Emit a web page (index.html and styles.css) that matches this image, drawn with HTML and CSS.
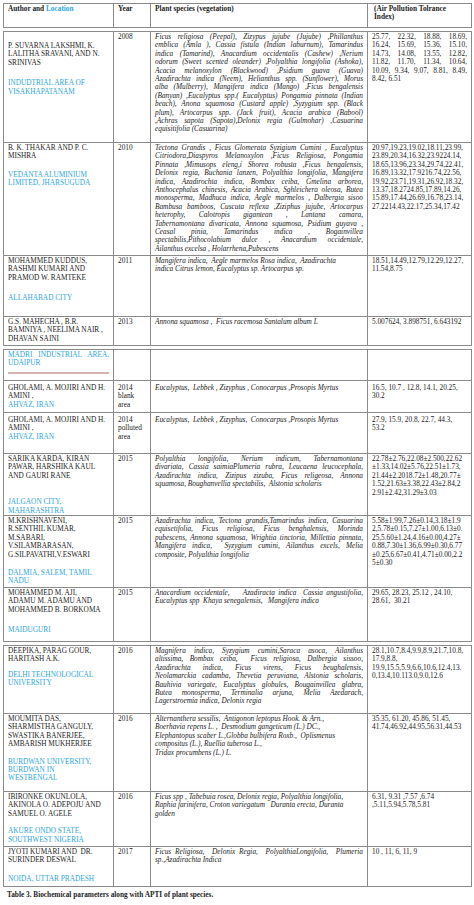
FILE: index.html
```html
<!DOCTYPE html>
<html>
<head>
<meta charset="utf-8">
<link rel="stylesheet" href="styles.css">
</head>
<body>
<div class="page">
<table class="t">
  <colgroup><col class="c1"><col class="c2"><col class="c3"><col class="c4"></colgroup>
  <tr class="hd">
    <td><b>Author and <span class="loc">Location</span></b></td>
    <td><b>Year</b></td>
    <td><b>Plant species (vegetation)</b></td>
    <td><b class="apti">(Air Pollution Tolrance<br>Index)</b></td>
  </tr>
</table>

<table class="t">
  <colgroup><col class="c1"><col class="c2"><col class="c3"><col class="c4"></colgroup>
  <tr class="r1">
    <td>
      <div class="sp9"></div>
      <div>P. SUVARNA LAKSHMI, K.<br>LALITHA SRAVANI, AND N.<br>SRINIVAS</div>
      <div class="sp12"></div>
      <div class="loc">INDUDTRIAL AREA OF<br>VISAKHAPATANAM</div>
    </td>
    <td>2008</td>
    <td class="it">
      <span class="jl">Ficus religiosa (Peepal), Zizypus jujube (Jujube) ,Phillanthus</span>
      <span class="jl">emblica (Amla ), Cassia fistula (Indian laburnum), Tamarindus</span>
      <span class="jl">indica (Tamarind), Anacardium occidentalis (Cashew) ,Nerium</span>
      <span class="jl">odorum (Sweet scented oleander) ,Polyalthia longifolia (Ashoka),</span>
      <span class="jl">Acacia melanoxylon (Blackwood) ,Psidium guava (Guava)</span>
      <span class="jl">Azadirachta indica (Neem), Helianthus spp. (Sunflower), Morus</span>
      <span class="jl">alba (Mulberry), Mangifera indica (Mango) ,Ficus bengalensis</span>
      <span class="jl">(Banyan) ,Eucalyptus spp.( Eucalyptus) Pongamia pinnata (Indian</span>
      <span class="jl">beach), Anona squamosa (Custard apple) ,Syzygium spp. (Black</span>
      <span class="jl">plum), Artocarpus spp. (Jack fruit), Acacia arabica (Babool)</span>
      <span class="jl">,Achras sapota (Sapota),Delonix regia (Gulmohar) ,Casuarina</span>
      <span class="ll">equisitifolia (Casuarina)</span>
    </td>
    <td>
      <span class="jl">25.77, 22.32, 18.88, 18.69,</span>
      <span class="jl">16.24, 15.69, 15.36, 15.10,</span>
      <span class="jl">14.73, 14.08, 13.55, 12.82,</span>
      <span class="jl">11.82, 11.70, 11.34, 10.64,</span>
      <span class="jl">10.09, 9.34, 9.07, 8.81, 8.49,</span>
      <span class="ll">8.42, 6.51</span>
    </td>
  </tr>
  <tr class="r2">
    <td>
      <div>B. K. THAKAR AND P. C.<br>MISHRA</div>
      <div class="sp10"></div>
      <div class="loc">VEDANTA ALUMINIUM<br>LIMITED, JHARSUGUDA</div>
    </td>
    <td>2010</td>
    <td class="it">
      <span class="jl">Tectona Grandis , Ficus Glomerata Syzigium Cumini , Eucalyptus</span>
      <span class="jl">Citriodora,Diaspyros Melanoxylon ,Ficus Religiosa, Pongamia</span>
      <span class="jl">Pinnata ,Mimusops eleng,i Shorea robusta ,Ficus bengalensis,</span>
      <span class="jl">Delonix regia, Buchania lanzen, Polyalthia longifolia, Mangifera</span>
      <span class="jl">indica, Azadirochta indica, Bombax ceiba, Gmelina arborea,</span>
      <span class="jl">Anthocephalus chinesis, Acacia Arabica, Sghleichera oleosa, Butea</span>
      <span class="jl">monosperma, Madhuca indica, Aegle marmelos , Dalbergia sisoo</span>
      <span class="jl">Bambusa bamboos, Cuscuta reflexa ,Ziziphus jujube, Artocarpus</span>
      <span class="jl">heterophy, Calotropis gigantean , Lantana camara,</span>
      <span class="jl">Tabernamontana divaricata, Annona squamosa, Psidium guyava ,</span>
      <span class="jl">Ceasal pinia, Tamarindus indica , Bogainvillea</span>
      <span class="jl">spectabilis,Pithocolabium dulce , Anacardium occidentale,</span>
      <span class="ll">Ailanthus excelsa , Holarrhena,Pubescens</span>
    </td>
    <td>
      <span class="jl">20.97,19.23,19.02,18.11,23.99,</span>
      <span class="jl">23.89,20.34,16.32,23.9224.14,</span>
      <span class="jl">18.65,13.96,23.34,29.74,22.41,</span>
      <span class="jl">16.89,13.32,17.9216.74,22.56,</span>
      <span class="jl">19.92,23.71,19.31,26.92,18.32,</span>
      <span class="jl">13.37,18.2724.85,17.89,14.26,</span>
      <span class="jl">15.89,17.44,26.69,16.78,23.14,</span>
      <span class="ll">27.2214.43,22.17,25.34,17.42</span>
    </td>
  </tr>
  <tr class="r3">
    <td>
      <div>MOHAMMED KUDDUS,<br>RASHMI KUMARI AND<br>PRAMOD W. RAMTEKE</div>
      <div class="sp12"></div>
      <div class="loc">ALLAHABAD CITY</div>
    </td>
    <td>2011</td>
    <td class="it">Mangifera indica,&nbsp; Aegle marmelos Rosa indica,&nbsp; Azadirachta<br>indica Citrus lemon, Eucalyptus sp. Artocarpus sp.</td>
    <td>18.51,14.49,12.79,12.29,12.27,<br>11.54,8.75</td>
  </tr>
  <tr class="r4">
    <td>G.S. MAHECHA , B.R.<br>BAMNIYA , NEELIMA NAIR ,<br>DHAVAN SAINI</td>
    <td>2013</td>
    <td class="it">Annona squamosa ,&nbsp; Ficus racemosa Santalum album L</td>
    <td>5.007624, 3.898751, 6.643192</td>
  </tr>
</table>

<table class="t">
  <colgroup><col class="c1"><col class="c2"><col class="c3"><col class="c4"></colgroup>
  <tr class="r5">
    <td>
      <span class="jl loc">MADRI INDUSTRIAL AREA,</span>
      <span class="ll loc">UDAIPUR</span>
      <div class="pink"></div>
    </td>
    <td></td>
    <td></td>
    <td></td>
  </tr>
  <tr class="r6 pt">
    <td>GHOLAMI, A. MOJIRI AND H.<br>AMINI ,<br><span class="loc">AHVAZ, IRAN</span></td>
    <td>2014<br>blank<br>area</td>
    <td class="it">Eucalyptus,&nbsp; Lebbek , Zizyphus , Conocarpus ,Prosopis Myrtus</td>
    <td>16.5, 10.7 , 12.8, 14.1, 20.25,<br>30.2</td>
  </tr>
  <tr class="r7 pt">
    <td>GHOLAMI, A. MOJIRI AND H.<br>AMINI ,<br><span class="loc">AHVAZ, IRAN</span></td>
    <td>2014<br>polluted<br>area</td>
    <td class="it">Eucalyptus,&nbsp; Lebbek , Zizyphus,&nbsp; Conocarpus ,Prosopis Myrtus</td>
    <td>27.9, 15.9, 20.8, 22.7, 44.3,<br>53.2</td>
  </tr>
  <tr class="r8">
    <td>
      <div>SARIKA KARDA, KIRAN<br>PAWAR, HARSHIKA KAUL<br>AND GAURI RANE</div>
      <div class="sp18"></div>
      <div class="loc">JALGAON CITY,<br>MAHARASHTRA</div>
    </td>
    <td>2015</td>
    <td class="it">
      <span class="jl">Polyalthia longifolia, Nerium indicum, Tabernamontana</span>
      <span class="jl">divariata, Cassia saimiaPlumeria rubra, Leucaena leucocephala,</span>
      <span class="jl">Azadirachta indica, Zizipus zizuba, Ficus religeosa, Annona</span>
      <span class="ll">squamosa, Boughanvellia spectabilis,&nbsp; Alstonia scholaris</span>
    </td>
    <td>
      <span class="jl">22.78±2.76,22.08±2.500,22.62</span>
      <span class="jl">±1.33,14.02±5.76,22.51±1.73,</span>
      <span class="jl">21.44±2.2018.72±1.48,20.77±</span>
      <span class="jl">1.52,21.63±3.38,22.43±2.84,2</span>
      <span class="ll">2.91±2.42,31.29±3.03</span>
    </td>
  </tr>
  <tr class="r9">
    <td>
      <div>M.KRISHNAVENI,<br>R.SENTHIL KUMAR,<br>M.SABARI,<br>V.SILAMBARASAN,<br>G.SILPAVATHI,V.ESWARI</div>
      <div class="sp10"></div>
      <div class="loc">DALMIA, SALEM, TAMIL<br>NADU</div>
    </td>
    <td>2015</td>
    <td class="it">
      <span class="jl">Azadirachta indica, Tectona grandis,Tamarindus indica, Casuarina</span>
      <span class="jl">equisetifolia, Ficus religiosa, Ficus benghalensis, Morinda</span>
      <span class="jl">pubescens, Annona squamosa, Wrightia tinctoria, Millettia pinnata,</span>
      <span class="jl">Mangifera indica,&nbsp; Syzygium cumini, Ailanthus excels, Melia</span>
      <span class="ll">composite, Polyalthia longifolia</span>
    </td>
    <td>
      <span class="jl">5.58±1.99,7.26±0.14,3.18±1.9</span>
      <span class="jl">2,5.78±0.15,7.27±1.00,6.13±0.</span>
      <span class="jl">25,5.60±1.24,4.16±0.00,4.27±</span>
      <span class="jl">0.88,7.30±1.36,6.99±0.30,6.77</span>
      <span class="jl">±0.25,6.67±0.41,4.71±0.00,2.2</span>
      <span class="ll">5±0.30</span>
    </td>
  </tr>
  <tr class="r10">
    <td>
      <div>MOHAMMED M. AJI,<br>ADAMU M. ADAMU AND<br>MOHAMMED B. BORKOMA</div>
      <div class="sp12"></div>
      <div class="loc">MAIDUGURI</div>
    </td>
    <td>2015</td>
    <td class="it">
      <span class="jl">Anacardium occidentale,&nbsp;&nbsp;&nbsp; Azadiracta indica&nbsp; Cassia angustifolia,</span>
      <span class="ll">Eucalyptus spp&nbsp; Khaya senegalensis,&nbsp;&nbsp; Mangifera indica</span>
    </td>
    <td>29.65, 28.23, 25.12 , 24.10,<br>28.61,&nbsp; 30.21</td>
  </tr>
</table>

<table class="t">
  <colgroup><col class="c1"><col class="c2"><col class="c3"><col class="c4"></colgroup>
  <tr class="r11">
    <td>
      <div>DEEPIKA, PARAG GOUR,<br>HARITASH A.K.</div>
      <div class="sp7"></div>
      <div class="loc">DELHI TECHNOLOGICAL<br>UNIVERSITY</div>
    </td>
    <td>2016</td>
    <td class="it">
      <span class="jl">Magnifera indica, Syzygium cumini,Saraca asoca, Ailanthus</span>
      <span class="jl">altissima, Bombax ceiba,&nbsp; Ficus religiosa, Dalbergia sissoo,</span>
      <span class="jl">Azadirachta indica, Ficus virens, Ficus beughalensis,</span>
      <span class="jl">Neolamarckia cadamba, Thevetia peruviana, Alstonia scholaris,</span>
      <span class="jl">Bauhivia variegate, Eucalyptus globules, Bougainvillea glabra,</span>
      <span class="jl">Butea monosperma, Terminalia arjuna, Melia Azedarach,</span>
      <span class="ll">Lagerstroemia indica, Delonix regia</span>
    </td>
    <td>28.1,10.7,8.4,9.9,8.9,21.7,10.8,<br>17.9,8.8,<br>19.9,15.5,5.9,6.6,10.6,12.4,13.<br>0,13.4,10.113.0,9.0,12.6</td>
  </tr>
  <tr class="r12">
    <td>
      <div>MOUMITA DAS,<br>SHARMISTHA GANGULY,<br>SWASTIKA BANERJEE,<br>AMBARISH MUKHERJEE</div>
      <div class="sp9"></div>
      <div class="loc">BURDWAN UNIVERSITY,<br>BURDWAN IN<br>WESTBENGAL</div>
    </td>
    <td>2016</td>
    <td class="it">Alternanthera sessilis,&nbsp; Antigonon leptopus Hook. &amp; Arn.,<br>Boerhavia repens L. ,&nbsp; Desmodium gangeticum (L.) DC.,<br>Elephantopus scaber L.,Globba bulbifera Roxb.,&nbsp; Oplismenus<br>compositus (L.), Ruellia tuberosa L.,<br>Tridax procumbens (L.) L.</td>
    <td>35.35, 61.20, 45.86, 51.45,<br>41.74,46.92,44.95,56.31,44.53</td>
  </tr>
  <tr class="r13">
    <td>
      <div>IBIRONKE OKUNLOLA,<br>AKINOLA O. ADEPOJU AND<br>SAMUEL O. AGELE</div>
      <div class="sp9"></div>
      <div class="loc">AKURE ONDO STATE,<br>SOUTHWEST NIGERIA</div>
    </td>
    <td>2016</td>
    <td class="it">Ficus spp , Tabebuia rosea, Delonix regia, Polyalthia longifolia,<br>Raphia farinifera, Croton variegatum&nbsp;&nbsp; Duranta erecta, Duranta<br>golden</td>
    <td>6.31, 9.31 ,7.57 ,6.74<br>,5.11,5.94,5.78,5.81</td>
  </tr>
  <tr class="r14">
    <td>
      <div>JYOTI KUMARI AND&nbsp; DR.<br>SURINDER DESWAL</div>
      <div class="sp10"></div>
      <div class="loc">NOIDA, UTTAR PRADESH</div>
    </td>
    <td>2017</td>
    <td class="it">
      <span class="jl">Ficus Religiosa,&nbsp; Delonix Regia,&nbsp; PolyalthiaLongifolia,&nbsp; Plumeria</span>
      <span class="ll">sp.,Azadirachta Indica</span>
    </td>
    <td>10 , 11, 6, 11, 9</td>
  </tr>
</table>

<p class="caption">Table 3. Biochemical parameters along with APTI of plant species.</p>
</div>
</body>
</html>
```

FILE: styles.css
```css
html, body {
  margin: 0;
  padding: 0;
  background: #ffffff;
}

.page {
  padding: 3px 3px 0 3px;
  font-family: "Liberation Serif", "Times New Roman", serif;
  font-size: 7.3px;
  line-height: 8.4px;
  color: #1c1c1c;
}

.t {
  border-collapse: collapse;
  table-layout: fixed;
  width: 468px;
  margin: 0 0 3px 0;
}

.c1 { width: 110px; }
.c2 { width: 37px; }
.c3 { width: 217px; }
.c4 { width: 104px; }

.t td {
  border: 1px solid #8a8a8a;
  vertical-align: top;
  padding: 1px 4px 0 4px;
  overflow: hidden;
}

.pt td {
  padding-top: 3px;
}

.it {
  font-style: italic;
}

.loc {
  color: #2ea6dc;
}

.apti {
  display: block;
  padding-left: 2px;
}

.jl {
  display: block;
  text-align: justify;
  text-align-last: justify;
  white-space: nowrap;
}

.ll {
  display: block;
  white-space: nowrap;
}

.sp7 { height: 7px; }
.sp9 { height: 9px; }
.sp10 { height: 10px; }
.sp12 { height: 12px; }
.sp18 { height: 18px; }

.pink {
  height: 2px;
  margin-top: 4px;
  background: #d9b2b2;
}

.hd { height: 24px; }
.r1 { height: 111px; }
.r2 { height: 113px; }
.r3 { height: 61px; }
.r4 { height: 29px; }
.r5 { height: 31px; }
.r6 { height: 32px; }
.r7 { height: 41px; }
.r8 { height: 60px; }
.r9 { height: 72px; }
.r10 { height: 54px; }
.r11 { height: 68px; }
.r12 { height: 78px; }
.r13 { height: 55px; }
.r14 { height: 40px; }

.caption {
  margin: 4px 0 0 4px;
  font-weight: bold;
}
```
